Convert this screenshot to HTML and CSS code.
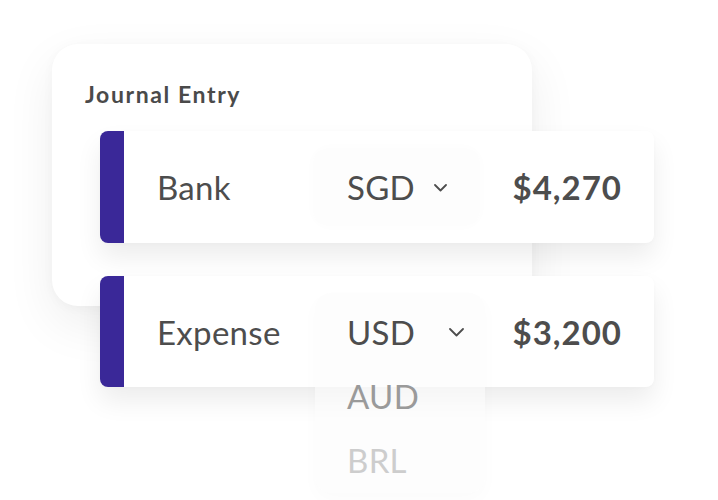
FILE: index.html
```html
<!DOCTYPE html>
<html>
<head>
<meta charset="utf-8">
<link rel="stylesheet" href="styles.css">
</head>
<body>
<div class="stage">
  <section class="card">
    <h2 class="title">Journal Entry</h2>
    <div class="rows">
      <div class="row">
        <div class="bar"></div>
        <div class="content">
          <div class="label">Bank</div>
          <div class="select">
            <span class="code">SGD</span>
            <svg class="chev" width="13" height="8" viewBox="0 0 13 8"><polyline points="1,1 6.5,6.5 12,1" fill="none" stroke="#4d4d4d" stroke-width="1.8" stroke-linecap="round" stroke-linejoin="round"/></svg>
          </div>
          <div class="amount">$4,270</div>
        </div>
      </div>
      <div class="row">
        <div class="bar"></div>
        <div class="content">
          <div class="label">Expense</div>
          <div class="select open">
            <div class="menu">
              <div class="item current"><span class="code">USD</span>
                <svg class="chev wide" width="15" height="9" viewBox="0 0 15 9"><polyline points="1,1 7.5,7.5 14,1" fill="none" stroke="#4d4d4d" stroke-width="1.8" stroke-linecap="round" stroke-linejoin="round"/></svg>
              </div>
              <div class="item aud">AUD</div>
              <div class="item brl">BRL</div>
            </div>
          </div>
          <div class="amount">$3,200</div>
        </div>
      </div>
    </div>
  </section>
</div>
</body>
</html>
```
FILE: styles.css
```css
html, body {
  margin: 0;
  padding: 0;
  background: #ffffff;
}
body {
  font-family: "Lato", "Noto Sans", sans-serif;
  color: #4d4d4d;
  width: 718px;
  height: 500px;
  overflow: hidden;
}
.stage {
  padding: 44px 0 0 52px;
}
.card {
  width: 480px;
  height: 262px;
  box-sizing: border-box;
  padding: 36px 0 0 33px;
  background: #ffffff;
  border-radius: 26px;
  box-shadow: 0 18px 50px rgba(0, 0, 0, 0.07), 0 2px 12px rgba(0, 0, 0, 0.03);
}
.title {
  margin: 0;
  font-size: 23px;
  line-height: 28px;
  font-weight: 700;
  letter-spacing: 1.6px;
  color: #4a4a4a;
}
.rows {
  margin: 23px 0 0 15px;
  width: 554px;
  display: flex;
  flex-direction: column;
  gap: 33px;
}
.row {
  height: 112px;
  display: flex;
  background: #ffffff;
  border-radius: 8px;
  box-shadow: 0 14px 26px rgba(0, 0, 0, 0.075), 0 1px 4px rgba(0, 0, 0, 0.02);
}
.row + .row {
  height: 111px;
}
.bar {
  width: 24px;
  flex: none;
  background: #3a2898;
  border-radius: 8px 0 0 8px;
}
.content {
  flex: 1;
  display: grid;
  grid-template-columns: 156px 167px 1fr;
  align-items: center;
  padding: 0 32px 0 33px;
}
.label, .code, .amount, .item {
  font-size: 33px;
  line-height: 40px;
  letter-spacing: 0.3px;
}
.amount {
  font-weight: 700;
  text-align: right;
  letter-spacing: 1px;
}
.select {
  height: 78px;
  box-sizing: border-box;
  padding-left: 34px;
  display: flex;
  align-items: center;
  border-radius: 16px;
  background: #fdfdfd;
  box-shadow: 0 0 12px rgba(0, 0, 0, 0.015);
  position: relative;
}
.chev {
  margin-left: 19px;
  margin-top: 2px;
}
.select.open {
  background: transparent;
  box-shadow: none;
}
.menu {
  position: absolute;
  top: 0;
  left: 2px;
  width: 170px;
  height: 200px;
  box-sizing: border-box;
  padding: 7px 0 0 32px;
  border-radius: 16px;
  background: rgba(251, 251, 251, 0.6);
  box-shadow: 0 6px 18px rgba(0, 0, 0, 0.018);
  z-index: 2;
}
.item {
  height: 64px;
  display: flex;
  align-items: center;
}
.chev.wide {
  margin-left: 34px;
}
.aud {
  color: #9a9a9a;
}
.brl {
  color: #cdcdcd;
}
```
